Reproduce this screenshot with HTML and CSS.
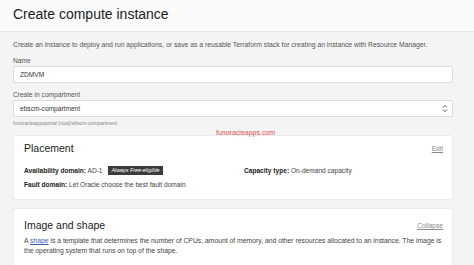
FILE: index.html
```html
<!DOCTYPE html>
<html lang="en">
<head>
<meta charset="utf-8">
<title>Create compute instance</title>
<link rel="stylesheet" href="styles.css">
</head>
<body>
<header class="page-head">
  <h1 class="page-title">Create compute instance</h1>
</header>
<main class="content">
  <p class="intro">Create an instance to deploy and run applications, or save as a reusable Terraform stack for creating an instance with Resource Manager.</p>
  <div class="field">
    <label class="field-label">Name</label>
    <div class="input">ZDMVM</div>
  </div>
  <div class="field">
    <label class="field-label">Create in compartment</label>
    <div class="input select">
      <span>ebscm-compartment</span>
      <svg class="chev" width="6" height="9" viewBox="0 0 6 9" fill="none" stroke="#555" stroke-width="1"><path d="M1 3.4 L3 1.4 L5 3.4"/><path d="M1 5.6 L3 7.6 L5 5.6"/></svg>
    </div>
    <div class="hint">funoracleappsportal (root)/ebscm-compartment</div>
  </div>
  <div class="watermark">funoracleapps.com</div>
  <section class="card placement">
    <div class="card-head">
      <h2 class="card-title">Placement</h2>
      <a class="card-link">Edit</a>
    </div>
    <div class="props">
      <div class="prop"><b>Availability domain:</b> AD-1 <span class="badge">Always Free-eligible</span></div>
      <div class="prop"><b>Capacity type:</b> On-demand capacity</div>
      <div class="prop"><b>Fault domain:</b> Let Oracle choose the best fault domain</div>
    </div>
  </section>
  <section class="card shape">
    <div class="card-head">
      <h2 class="card-title">Image and shape</h2>
      <a class="card-link">Collapse</a>
    </div>
    <p class="card-text">A <a class="blue">shape</a> is a template that determines the number of CPUs, amount of memory, and other resources allocated to an instance. The image is the operating system that runs on top of the shape.</p>
  </section>
</main>
</body>
</html>
```

FILE: styles.css
```css
* { box-sizing: border-box; }
html, body { margin: 0; padding: 0; }
body {
  width: 474px;
  height: 265px;
  overflow: hidden;
  background: #f4f4f4;
  font-family: "Liberation Sans", Arial, sans-serif;
  color: #333;
}
.page-head {
  height: 32px;
  background: #fafafa;
  border-bottom: 1px solid #e6e6e6;
  padding: 6px 13px 0;
}
.page-title {
  margin: 0;
  font-size: 14px;
  font-weight: 400;
  line-height: 16px;
  color: #1e1e1e;
}
.content {
  position: relative;
  height: 233px;
  overflow: hidden;
  padding: 8px 21px 0 13px;
  display: flex;
  flex-direction: column;
}
.intro {
  margin: 0;
  font-size: 6.8px;
  line-height: 9px;
  color: #555;
}
.field { display: flex; flex-direction: column; margin-top: 7px; }
.field-label {
  font-size: 6.6px;
  line-height: 9px;
  color: #555;
  margin-bottom: 1px;
}
.input {
  height: 17px;
  flex: none;
  background: #fff;
  border: 1px solid #dcdcdc;
  border-radius: 2px;
  padding: 0 6px;
  font-size: 6.6px;
  line-height: 15px;
  color: #333;
  display: flex;
  align-items: center;
}
.select { justify-content: space-between; padding-right: 4px; }
.chev { display: block; }
.hint {
  margin-top: 3px;
  font-size: 5px;
  line-height: 7px;
  color: #888;
}
.watermark {
  position: absolute;
  left: 216px;
  top: 97px;
  font-size: 7px;
  line-height: 8px;
  color: #e0524f;
  z-index: 1;
}
.card {
  flex: none;
  background: #fff;
  border: 1px solid #ececec;
  border-radius: 2px;
  padding: 6px 9px 8px 10px;
}
.placement { margin-top: 8px; }
.shape { margin-top: 8px; padding-top: 10px; height: 70px; }
.card-head {
  display: flex;
  justify-content: space-between;
  align-items: center;
}
.card-title {
  margin: 0;
  font-size: 10.5px;
  font-weight: 400;
  line-height: 13px;
  color: #222;
}
.card-link {
  font-size: 6.6px;
  line-height: 9px;
  color: #888;
  text-decoration: underline;
}
.props {
  margin-top: 10px;
  display: grid;
  grid-template-columns: 220px 1fr;
  row-gap: 2px;
  font-size: 6.6px;
  line-height: 12px;
  color: #444;
}
.prop b { color: #222; font-weight: 700; }
.badge {
  display: inline-block;
  margin-left: 4px;
  padding: 0 3px;
  background: #3b3b3b;
  color: #fff;
  font-style: italic;
  font-size: 5.4px;
  line-height: 9px;
  vertical-align: 1px;
}
.card-text {
  margin: 4px 0 0;
  font-size: 6.8px;
  line-height: 10px;
  color: #444;
}
.blue { color: #3a5fb0; text-decoration: underline; }
```
